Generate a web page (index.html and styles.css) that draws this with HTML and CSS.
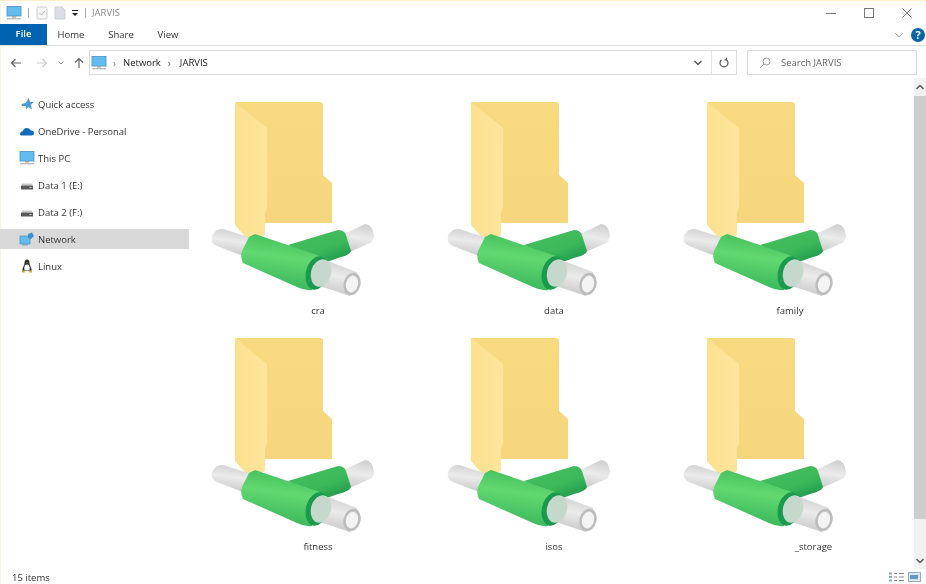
FILE: index.html
```html
<!DOCTYPE html>
<html lang="en">
<head>
<meta charset="utf-8">
<title>JARVIS</title>
<link rel="stylesheet" href="styles.css">
</head>
<body>
<svg class="defs" width="0" height="0" aria-hidden="true">
  <defs>
    <linearGradient id="fback" x1="0" y1="0" x2="0" y2="1"><stop offset="0" stop-color="#f8da80"/><stop offset="1" stop-color="#f6d67c"/></linearGradient>
    <linearGradient id="ffront" x1="0" y1="0" x2="1" y2="0"><stop offset="0" stop-color="#fbe08e"/><stop offset="1" stop-color="#fde59c"/></linearGradient>
    <linearGradient id="gmain" x1="0.6" y1="0" x2="0.4" y2="1"><stop offset="0" stop-color="#3fbd5a"/><stop offset=".4" stop-color="#62d870"/><stop offset="1" stop-color="#36b55a"/></linearGradient>
    <linearGradient id="gbranch" x1="0.2" y1="0" x2="0.9" y2="1"><stop offset="0" stop-color="#46c05f"/><stop offset=".55" stop-color="#3cb85a"/><stop offset="1" stop-color="#16924a"/></linearGradient>
    <linearGradient id="pipe" x1="0.6" y1="0" x2="0.4" y2="1"><stop offset="0" stop-color="#cfcfcf"/><stop offset=".45" stop-color="#ebebeb"/><stop offset="1" stop-color="#c6c6c6"/></linearGradient>
    <symbol id="share" viewBox="0 0 180 205">
      <path d="M30 7H115Q118 7 118 10V80L127 88V128H55V60Z" fill="url(#fback)"/>
      <path d="M30 7L62 33V112L60 118V140L45 147L30 130Z" fill="url(#ffront)"/>
      <path d="M7 141Q11 133 18 134L50 144L38 161L12 151Q5 148 7 141Z" fill="url(#pipe)"/>
      <path d="M135 141L160 129Q167 129 169 140Q169 147 163 149L140 159Z" fill="url(#pipe)"/>
      <path d="M83 150L133 135Q139 135 141 140L146 156Q145 160 133 163L116 169Z" fill="url(#gbranch)"/>
      <path d="M120 165L152 177L145 201L112 190Z" fill="url(#pipe)"/>
      <ellipse cx="147" cy="189" rx="8.500" ry="11.500" transform="rotate(14 147 189)" fill="#bdbdbd"/>
      <ellipse cx="147" cy="189" rx="6" ry="8.500" transform="rotate(14 147 189)" fill="#f4f4f4"/>
      <path d="M50 139L115 161L107 195Q100 196 92 192L38 168Q35 162 37 156L44 142Z" fill="url(#gmain)"/>
      <ellipse cx="112" cy="178" rx="11" ry="17" transform="rotate(14 112 178)" fill="#1b9a4d"/>
      <ellipse cx="116" cy="178" rx="10" ry="14" transform="rotate(14 116 178)" fill="#c4d9cb"/>
    </symbol>
    <symbol id="pc" viewBox="0 0 16 16">
      <rect x="1" y="1.500" width="14" height="9.500" fill="#62bdee" stroke="#4a90c0" stroke-width=".8"/>
      <rect x="6" y="11" width="4" height="1.600" fill="#a8a8a8"/>
      <rect x="1" y="13" width="14" height="1.400" fill="#bdbdbd"/>
    </symbol>
    <symbol id="drive" viewBox="0 0 16 16">
      <path d="M2 8.500L3.500 6.500H12.500L14 8.500Z" fill="#c9c9c9"/>
      <rect x="2" y="8.500" width="12" height="4" rx=".6" fill="#5a5a5a"/>
      <rect x="10.500" y="10" width="2" height="1" fill="#cfcfcf"/>
    </symbol>
  </defs>
</svg>

<div class="window">
  <header class="titlebar">
    <div class="qat">
      <svg class="ic16"><use href="#pc"/></svg>
      <span class="sep"></span>
      <svg class="ic14" viewBox="0 0 14 14"><rect x="2" y="1" width="10" height="12" rx="1" fill="#f4f4f4" stroke="#cfcfcf"/><path d="M4.500 7l2 2 3.500-4" fill="none" stroke="#bbb"/></svg>
      <svg class="ic14" viewBox="0 0 14 14"><path d="M2 1H9L12 4V13H2Z" fill="#d9dfe5" stroke="#d0d0d0"/></svg>
      <svg class="ic-drop" viewBox="0 0 8 8"><rect x="1" y="1" width="6" height="1" fill="#222"/><path d="M1 4H7L4 7Z" fill="#222"/></svg>
      <span class="sep sep-last"></span>
      <span class="title">JARVIS</span>
    </div>
    <div class="winctl">
      <svg viewBox="0 0 12 12"><path d="M1 6.500H11" stroke="#777" fill="none"/></svg>
      <svg viewBox="0 0 12 12"><rect x="1.500" y="1.500" width="9" height="9" stroke="#777" fill="none"/></svg>
      <svg viewBox="0 0 12 12"><path d="M1.500 1.500L10.500 10.500M10.500 1.500L1.500 10.500" stroke="#777" fill="none"/></svg>
    </div>
  </header>

  <nav class="ribbon">
    <span class="tab tab-file">File</span>
    <span class="tab tab-home">Home</span>
    <span class="tab tab-share">Share</span>
    <span class="tab tab-view">View</span>
    <span class="ribbon-end">
      <svg class="rib-chev" viewBox="0 0 10 6"><path d="M1 1L5 5L9 1" stroke="#aaa" fill="none"/></svg>
      <span class="help">?</span>
    </span>
  </nav>

  <div class="addrrow">
    <div class="navbtns">
      <svg class="nb nb-back" viewBox="0 0 12 12"><path d="M11 6H1.500M5.500 2L1.500 6L5.500 10" stroke="#666" stroke-width="1.200" fill="none"/></svg>
      <svg class="nb nb-fwd" viewBox="0 0 12 12"><path d="M1 6H10.500M6.500 2L10.500 6L6.500 10" stroke="#ccc" stroke-width="1.200" fill="none"/></svg>
      <svg class="nb nb-drop" viewBox="0 0 8 8"><path d="M1.500 2.500L4 5L6.500 2.500" stroke="#888" fill="none"/></svg>
      <svg class="nb nb-up" viewBox="0 0 12 12"><path d="M6 11V1.500M2 5.500L6 1.500L10 5.500" stroke="#666" stroke-width="1.200" fill="none"/></svg>
    </div>
    <div class="addr">
      <svg class="ic16"><use href="#pc"/></svg>
      <span class="crumb-sep">›</span>
      <span class="crumb">Network</span>
      <span class="crumb-sep crumb-sep-wide">›</span>
      <span class="crumb">JARVIS</span>
      <svg class="addr-chev" viewBox="0 0 10 6"><path d="M1.500 1L5 4.500L8.500 1" stroke="#555" stroke-width="1.300" fill="none"/></svg>
      <span class="refresh"><svg viewBox="0 0 12 12"><path d="M3.500 2.800A4 4 0 1 0 8.500 2.800M8.500 2.800V.8M8.500 2.800H6.500" stroke="#555" stroke-width="1.200" fill="none"/></svg></span>
    </div>
    <div class="search">
      <svg viewBox="0 0 12 12"><circle cx="7.500" cy="4.500" r="3.500" stroke="#999" fill="none"/><path d="M5 7L1 11" stroke="#999" fill="none"/></svg>
      <span>Search JARVIS</span>
    </div>
  </div>

  <main class="body">
    <aside class="sidebar">
      <div class="nav-item">
        <svg class="ic16" viewBox="0 0 16 16"><path d="M9.500 2L11 6H15L11.800 8.800L13 13.500L9.500 11L7 13.500L6.800 10H3L2.500 8L6.500 7L7.500 6Z" fill="#4a9bd6"/></svg>
        <span>Quick access</span>
      </div>
      <div class="nav-item">
        <svg class="ic16" viewBox="0 0 16 16"><path d="M1 11.500Q1 8.500 3.800 8.300Q4.500 5 8 5Q10.800 5 11.800 7.500Q15 7.500 15 10.300Q15 12.500 12.500 12.500H2.500Q1 12.500 1 11.500Z" fill="#0f6cbd"/></svg>
        <span>OneDrive - Personal</span>
      </div>
      <div class="nav-item"><svg class="ic16"><use href="#pc"/></svg><span>This PC</span></div>
      <div class="nav-item"><svg class="ic16"><use href="#drive"/></svg><span>Data 1 (E:)</span></div>
      <div class="nav-item"><svg class="ic16"><use href="#drive"/></svg><span>Data 2 (F:)</span></div>
      <div class="nav-item is-selected">
        <svg class="ic16" viewBox="0 0 16 16"><rect x="1" y="5" width="10" height="8" fill="#62bdee" stroke="#3f8fc4" stroke-width=".7"/><path d="M9 3L13 1.500L15 5L12 8L9 7Z" fill="#3d8fd1"/><rect x="3" y="13" width="6" height="1.500" fill="#8ab"/></svg>
        <span>Network</span>
      </div>
      <div class="nav-item">
        <svg class="ic16" viewBox="0 0 16 16"><path d="M8 1.500Q5.500 1.500 5.500 5Q5.500 7 4 9.500Q2.800 12 4 13H12Q13.200 12 12 9.500Q10.500 7 10.500 5Q10.500 1.500 8 1.500Z" fill="#2b2b2b"/><path d="M6 7Q8 6 10 7Q11.300 10 10.500 12.500H5.500Q4.700 10 6 7Z" fill="#fff"/><path d="M3 13L5.500 12L6 14.500H3ZM13 13L10.500 12L10 14.500H13Z" fill="#d9a520"/><path d="M7 4.500L9 4.500L8 5.500Z" fill="#d9a520"/></svg>
        <span>Linux</span>
      </div>
    </aside>

    <section class="tiles">
      <figure class="tile"><svg class="share-ic"><use href="#share" width="180" height="205" x="5"/></svg><figcaption>cra</figcaption></figure>
      <figure class="tile"><svg class="share-ic"><use href="#share" width="180" height="205" x="5"/></svg><figcaption>data</figcaption></figure>
      <figure class="tile"><svg class="share-ic"><use href="#share" width="180" height="205" x="5"/></svg><figcaption>family</figcaption></figure>
      <figure class="tile"><svg class="share-ic"><use href="#share" width="180" height="205" x="5"/></svg><figcaption>fitness</figcaption></figure>
      <figure class="tile"><svg class="share-ic"><use href="#share" width="180" height="205" x="5"/></svg><figcaption>isos</figcaption></figure>
      <figure class="tile"><svg class="share-ic"><use href="#share" width="180" height="205" x="5"/></svg><figcaption class="caption-shifted">_storage</figcaption></figure>
    </section>

    <div class="scrollbar">
      <svg class="sb-arrow" viewBox="0 0 10 6"><path d="M1.500 5L5 1.500L8.500 5" stroke="#555" stroke-width="1.400" fill="none"/></svg>
      <div class="sb-thumb"></div>
      <svg class="sb-arrow" viewBox="0 0 10 6"><path d="M1.500 1L5 4.500L8.500 1" stroke="#555" stroke-width="1.400" fill="none"/></svg>
    </div>
  </main>

  <footer class="status">
    <span>15 items</span>
    <span class="viewbtns">
      <svg viewBox="0 0 15 10"><path d="M0 1.500H3M0 5H3M0 8.500H3" stroke="#8ab" stroke-width="2" fill="none"/><path d="M5 1.500H8M10 1.500H15M5 5H8M10 5H15M5 8.500H8M10 8.500H15" stroke="#888" fill="none"/></svg>
      <svg viewBox="0 0 13 10"><rect x=".5" y=".5" width="12" height="9" fill="#dfe6ec" stroke="#9ab"/><rect x="2" y="3" width="8" height="4" fill="#5b9bc8"/></svg>
    </span>
  </footer>
</div>
</body>
</html>
```
FILE: styles.css
```css
* { box-sizing: border-box; }
html, body { margin: 0; height: 100%; overflow: hidden; background: #fff; }
body {
  font-family: "Open Sans", "Noto Sans", sans-serif;
  font-size: 9.5px;
  color: #333;
}
.defs { display: block; height: 0; }
.window {
  height: 584px;
  display: flex;
  flex-direction: column;
  border-top: 1px solid #fbeecb;
  border-left: 1px solid #fdf3d8;
  filter: blur(.3px);
}
.ic16 { width: 16px; height: 16px; flex: none; }
.ic14 { width: 14px; height: 14px; flex: none; }

.titlebar {
  height: 23px;
  display: flex;
  justify-content: space-between;
  align-items: center;
}
.qat { display: flex; align-items: center; padding-left: 5px; }
.qat .ic14 { margin-right: 4px; }
.sep { width: 1px; height: 10px; background: #aaa; margin: 0 6px 0 6px; }
.ic-drop { width: 8px; height: 8px; margin: 0 0 0 0; }
.sep.sep-last { margin: 0 6px 0 6px; }
.title { color: #8a8a8a; }
.winctl { display: flex; gap: 26px; padding-right: 13px; }
.winctl svg { width: 12px; height: 12px; }

.ribbon {
  height: 22px;
  display: flex;
  border-bottom: 1px solid #dedede;
  align-items: center;
  margin-left: -1px;
}
.tab { display: block; text-align: center; }
.tab-file {
  width: 47px;
  height: 21px;
  line-height: 20px;
  background: #0063b1;
  color: #fff;
  font-weight: 600;
}
.tab-home { width: 48px; }
.tab-share { width: 52px; }
.tab-view { width: 42px; }
.ribbon-end { margin-left: auto; display: flex; align-items: center; gap: 7px; padding-right: 1px; }
.rib-chev { width: 10px; height: 6px; }
.help {
  width: 14px;
  height: 14px;
  border-radius: 50%;
  background: #0a62a8;
  color: #fff;
  font-weight: 700;
  font-size: 11px;
  line-height: 14px;
  text-align: center;
}

.addrrow {
  height: 32px;
  display: flex;
  align-items: center;
  padding-top: 1px;
}
.navbtns { width: 88px; display: flex; align-items: center; padding-left: 9px; }
.nb { width: 12px; height: 12px; flex: none; }
.nb-fwd { margin-left: 14px; }
.nb-drop { width: 8px; height: 8px; margin-left: 9px; }
.nb-up { margin-left: 8px; }
.addr {
  width: 648px;
  height: 25px;
  border: 1px solid #dcdcdc;
  display: flex;
  align-items: center;
  padding-left: 1px;
  color: #222;
}
.crumb-sep { color: #777; margin: 0 7px 0 6px; font-size: 10px; }
.crumb-sep.crumb-sep-wide { margin: 0 9px 0 7px; }
.addr-chev { width: 10px; height: 6px; margin-left: auto; margin-right: 8px; }
.refresh {
  width: 25px;
  height: 23px;
  border-left: 1px solid #e4e4e4;
  display: flex;
  align-items: center;
  justify-content: center;
}
.refresh svg { width: 12px; height: 12px; }
.search {
  width: 170px;
  height: 25px;
  margin-left: 10px;
  border: 1px solid #dcdcdc;
  display: flex;
  align-items: center;
  padding-left: 11px;
  gap: 10px;
  color: #666;
}
.search svg { width: 12px; height: 12px; flex: none; }

.body { flex: 1; display: flex; min-height: 0; }
.sidebar {
  width: 199px;
  padding-top: 16px;
  display: flex;
  flex-direction: column;
  gap: 7px;
  flex: none;
}
.nav-item {
  width: 188px;
  height: 20px;
  display: flex;
  align-items: center;
  padding-left: 18px;
  gap: 3px;
  flex: none;
}
.nav-item.is-selected { background: #d9d9d9; margin-left: -1px; width: 189px; padding-left: 19px; }

.tiles {
  width: 714px;
  flex: none;
  display: grid;
  grid-template-columns: repeat(3, 236px);
  grid-auto-rows: 236px;
  padding-top: 17px;
  overflow: hidden;
}
.tile { margin: 0; text-align: center; }
.share-ic { display: block; width: 236px; height: 205px; }
.tile figcaption { line-height: 13px; margin-top: 4px; color: #333; }
.tile .caption-shifted { padding-left: 47px; }

.scrollbar {
  width: 12px;
  flex: none;
  background: #f1f1f1;
  display: flex;
  flex-direction: column;
  align-items: center;
  padding: 6px 0 5px;
}
.sb-arrow { width: 10px; height: 6px; flex: none; }
.sb-thumb { width: 12px; height: 423px; background: #cdcdcd; margin: 6px 0 auto; }

.status {
  height: 15px;
  display: flex;
  justify-content: space-between;
  align-items: center;
  padding: 1px 5px 0 11px;
}
.viewbtns { display: flex; gap: 4px; }
.viewbtns svg { width: 15px; height: 10px; }
.viewbtns svg + svg { width: 13px; }
```
